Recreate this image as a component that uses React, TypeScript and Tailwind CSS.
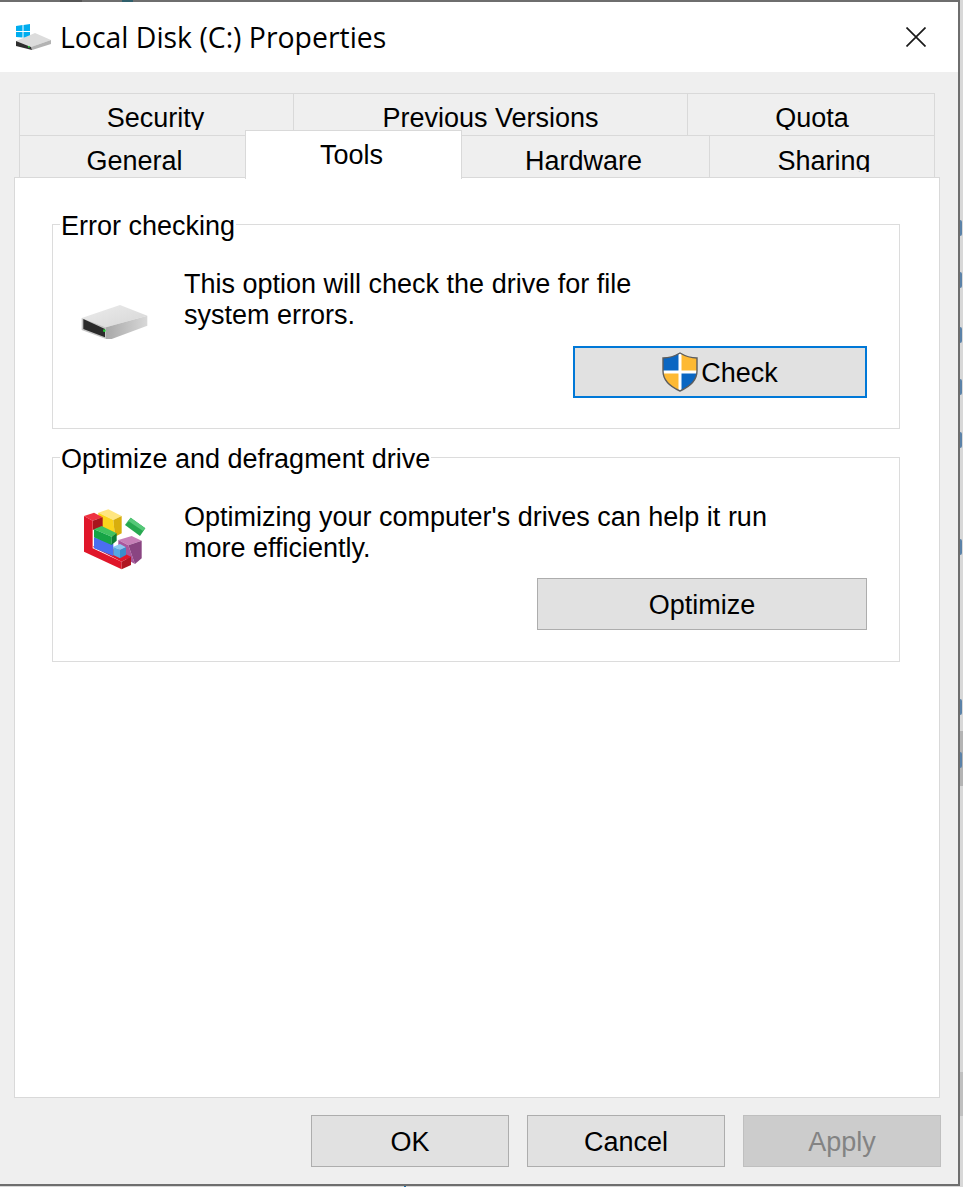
import React from "react";

const sans = "font-['Liberation_Sans',Arial,sans-serif]";

function DriveIcon() {
  return (
    <svg width="90" height="60" viewBox="0 0 270 180" className="shrink-0">
      <defs>
        <linearGradient id="driveTop" x1="0" y1="0" x2="1" y2="1">
          <stop offset="0" stopColor="#ececec" />
          <stop offset="1" stopColor="#d6d6d6" />
        </linearGradient>
        <linearGradient id="driveSide" x1="0" y1="0" x2="1" y2="0">
          <stop offset="0" stopColor="#a8a8a8" />
          <stop offset="1" stopColor="#d8d8d8" />
        </linearGradient>
        <filter id="soft">
          <feGaussianBlur stdDeviation="1.6" />
        </filter>
      </defs>
      <g filter="url(#soft)">
        <polygon points="35,87 150,48 232,80 108,115" fill="url(#driveTop)" />
        <polygon points="108,115 232,80 232,110 125,150 108,150" fill="url(#driveSide)" />
        <polygon points="35,87 108,115 108,150 35,123" fill="#c4c4c4" />
        <polygon points="40,90 105,120 105,145 40,120" fill="#2b2b2b" />
        <circle cx="103" cy="125" r="4" fill="#21c934" />
      </g>
    </svg>
  );
}

function DefragIcon() {
  return (
    <svg width="90" height="80" viewBox="0 0 270 240" className="shrink-0">
      <g filter="url(#soft)">
        {/* yellow block */}
        <polygon points="85,38 115,28 155,48 130,60" fill="#ffe680" />
        <polygon points="85,38 130,60 135,110 85,90" fill="#fbd41a" />
        <polygon points="130,60 155,48 155,100 135,110" fill="#d8ae10" />
        {/* purple block */}
        <polygon points="145,120 185,108 215,122 175,136" fill="#c77fb8" />
        <polygon points="145,120 175,136 195,192 145,165" fill="#a9579c" />
        <polygon points="175,136 215,122 215,175 195,192" fill="#8a4582" />
        {/* red L */}
        <polygon points="42,48 72,38 98,52 68,62" fill="#ee3340" />
        <polygon points="68,62 98,52 98,80 68,90" fill="#a8121e" />
        <polygon points="42,48 68,62 68,145 155,185 155,208 42,155" fill="#e0182a" />
        <polygon points="68,140 96,130 183,170 155,185" fill="#e0182a" />
        <polygon points="155,185 183,170 183,195 155,208" fill="#b01420" />
        {/* blue block */}
        <polygon points="72,112 130,132 130,168 72,145" fill="#4c6ef0" />
        {/* light blue block */}
        <polygon points="130,140 150,132 168,142 150,150" fill="#8cc8f0" />
        <polygon points="130,140 150,150 150,175 130,165" fill="#57a8e4" />
        <polygon points="150,150 168,142 168,165 150,175" fill="#3b8ccb" />
        {/* green block */}
        <polygon points="72,88 95,78 140,100 125,110" fill="#3fc25f" />
        <polygon points="72,88 125,110 125,135 72,112" fill="#12a445" />
        <polygon points="125,110 140,100 140,122 125,135" fill="#0d7d35" />
        {/* floating green */}
        <polygon points="165,75 182,53 226,85 210,108" fill="#27a84f" />
        <polygon points="165,75 182,53 226,85 218,92 176,64" fill="#55c878" />
      </g>
    </svg>
  );
}

function ShieldIcon() {
  return (
    <svg width="38" height="40" viewBox="0 0 38 40" className="shrink-0">
      <defs>
        <clipPath id="shieldClip">
          <path d="M19 1 C14 4 7 6 2 6 V19 C2 29 10 35 19 39 C28 35 36 29 36 19 V6 C31 6 24 4 19 1 Z" />
        </clipPath>
      </defs>
      <g clipPath="url(#shieldClip)">
        <rect x="0" y="0" width="19" height="20" fill="#0a66c2" />
        <rect x="19" y="0" width="19" height="20" fill="#fdb933" />
        <rect x="0" y="20" width="19" height="20" fill="#fdb933" />
        <rect x="19" y="20" width="19" height="20" fill="#0a66c2" />
        <rect x="17.5" y="0" width="3" height="40" fill="#ffffff" />
        <rect x="0" y="18.5" width="38" height="3" fill="#ffffff" />
      </g>
      <path d="M19 1 C14 4 7 6 2 6 V19 C2 29 10 35 19 39 C28 35 36 29 36 19 V6 C31 6 24 4 19 1 Z" fill="none" stroke="#5d5d5d" strokeWidth="1.4" />
    </svg>
  );
}

function TitleIcon() {
  return (
    <svg width="36" height="28" viewBox="0 0 36 28" className="shrink-0">
      <defs>
        <filter id="softSmall">
          <feGaussianBlur stdDeviation="0.35" />
        </filter>
      </defs>
      <g filter="url(#softSmall)">
        <polygon points="1,3 7.5,2 7.5,8 1,8" fill="#00adef" />
        <polygon points="8.5,1.9 15,1 15,8 8.5,8" fill="#00adef" />
        <polygon points="1,9 7.5,9 7.5,14.5 1,14" fill="#00adef" />
        <polygon points="8.5,9 15,9 15,15.5 8.5,14.7" fill="#00adef" />
        <polygon points="1,18 20,10 36,17 16,24" fill="#dcdcdc" />
        <polygon points="16,24 36,17 36,21 17,27" fill="#b3b3b3" />
        <polygon points="1,18 16,24 17,27 1,23" fill="#2f2f2f" />
        <rect x="13" y="23" width="1.6" height="1.6" fill="#23c935" />
      </g>
    </svg>
  );
}

function Tab({ label, width, pad, clip }: { label: string; width: string; pad: string; clip: string }) {
  return (
    <div className={`${width} h-[43px] ${pad} border border-[#d9d9d9] -ml-px first:ml-0 bg-[#efefef] text-center`}>
      <div className={`${clip} overflow-hidden leading-[30px]`}>{label}</div>
    </div>
  );
}

function Group({ legend, icon, iconTop, children }: { legend: string; icon: React.ReactNode; iconTop: string; children: React.ReactNode }) {
  return (
    <div className="relative w-[848px] h-[205px] border border-[#dcdcdc]">
      <span className="absolute left-[7px] -top-[14px] px-px bg-white leading-[30px]">{legend}</span>
      <div className="flex">
        <div className={`ml-[17px] ${iconTop}`}>{icon}</div>
        <div className="ml-6 mt-[44px] flex-1">{children}</div>
      </div>
    </div>
  );
}

export default function App() {
  return (
    <div className={`relative w-[963px] h-[1187px] bg-[#d8d8d8] overflow-hidden text-[27px] text-black ${sans}`}>
      <div className="flex flex-col w-[960px] h-[1186px] border-t-2 border-r-2 border-b-2 border-[#6e6e6e] bg-[#efefef]">
        {/* Title bar */}
        <div className="flex items-center h-[70px] bg-white pl-[15px] pr-[32px]">
          <TitleIcon />
          <span className="ml-[9px] text-[28.4px] font-['Open_Sans',sans-serif]">Local Disk (C:) Properties</span>
          <svg width="20" height="20" viewBox="0 0 20 20" className="ml-auto -mt-px">
            <path d="M0.5 0.5 L19.5 19.5 M19.5 0.5 L0.5 19.5" stroke="#1a1a1a" strokeWidth="1.7" fill="none" />
          </svg>
        </div>

        {/* Tabs */}
        <div className="ml-[19px] mt-[21px] w-[916px] flex">
          <Tab label="Security" width="w-[275px]" pad="pt-[9px] pr-[2px]" clip="h-[27px]" />
          <Tab label="Previous Versions" width="w-[395px]" pad="pt-[9px]" clip="h-[27px]" />
          <Tab label="Quota" width="w-[248px]" pad="pt-[9px] pl-[2px]" clip="h-[27px]" />
        </div>
        <div className="relative z-10 ml-[19px] -mt-px w-[916px] h-[43px] flex items-end">
          <Tab label="General" width="w-[227px]" pad="pt-[10px] pl-[4px]" clip="h-[26px]" />
          <div className="relative w-[217px] h-[49px] -ml-px -mb-px border border-b-0 border-[#d9d9d9] bg-white pt-[9px] pr-[4px] text-center leading-[30px]">
            Tools
          </div>
          <Tab label="Hardware" width="w-[249px]" pad="pt-[10px] pr-[4px]" clip="h-[26px]" />
          <Tab label="Sharing" width="w-[226px]" pad="pt-[10px] pl-[4px]" clip="h-[26px]" />
        </div>

        {/* Page */}
        <div className="ml-[14px] -mt-px w-[926px] h-[921px] border border-[#d9d9d9] bg-white pl-[37px] pt-[46px] flex flex-col gap-[28px]">
          <Group legend="Error checking" icon={<DriveIcon />} iconTop="mt-[64px]">
            <p className="leading-[31px]">
              This option will check the drive for file
              <br />
              system errors.
            </p>
            <div className="flex justify-end mr-[32px] mt-[15px]">
              <button className="flex items-center justify-center w-[294px] h-[52px] border-2 border-[#0078d7] bg-[#e1e1e1]">
                <ShieldIcon />
                <span className="ml-[2px] mr-[1px] pt-[2px]">Check</span>
              </button>
            </div>
          </Group>
          <Group legend="Optimize and defragment drive" icon={<DefragIcon />} iconTop="mt-[42px]">
            <p className="leading-[31px]">
              Optimizing your computer's drives can help it run
              <br />
              more efficiently.
            </p>
            <div className="flex justify-end mr-[32px] mt-[14px]">
              <button className="w-[330px] h-[52px] pt-[2px] border border-[#adadad] bg-[#e1e1e1]">Optimize</button>
            </div>
          </Group>
        </div>

        {/* Footer buttons */}
        <div className="flex mt-[17px] ml-[311px] gap-[18px]">
          <button className="w-[198px] h-[52px] pt-[2px] border border-[#adadad] bg-[#e1e1e1]">OK</button>
          <button className="w-[198px] h-[52px] pt-[2px] border border-[#adadad] bg-[#e1e1e1]">Cancel</button>
          <button className="w-[198px] h-[52px] pt-[2px] border border-[#bfbfbf] bg-[#cccccc] text-[#838383]">Apply</button>
        </div>
      </div>

      {/* Bits of the desktop showing behind the window edge */}
      <span className="absolute left-[122px] top-0 w-[11px] h-[2px] bg-[#2f5f6b]" />
      <span className="absolute left-[60px] top-0 w-[22px] h-[2px] bg-[#565656]" />
      <span className="absolute left-[404px] bottom-0 w-[2px] h-px bg-[#1f6fa8]" />
      <span className="absolute left-[960px] top-[220px] w-[2px] h-[16px] rounded-r-full bg-[#5b82a8]" />
      <span className="absolute left-[960px] top-[272px] w-[2px] h-[16px] rounded-r-full bg-[#5b82a8]" />
      <span className="absolute left-[960px] top-[327px] w-[2px] h-[16px] rounded-r-full bg-[#5b82a8]" />
      <span className="absolute left-[960px] top-[379px] w-[2px] h-[16px] rounded-r-full bg-[#5b82a8]" />
      <span className="absolute left-[960px] top-[432px] w-[2px] h-[16px] rounded-r-full bg-[#5b82a8]" />
      <span className="absolute left-[960px] top-[539px] w-[2px] h-[16px] rounded-r-full bg-[#5b82a8]" />
      <span className="absolute left-[960px] top-[699px] w-[2px] h-[16px] rounded-r-full bg-[#5b82a8]" />
      <span className="absolute left-[960px] top-[731px] w-[3px] h-[55px] bg-[#b4b4b4]" />
      <span className="absolute left-[960px] top-[752px] w-[2px] h-[16px] rounded-r-full bg-[#5b82a8]" />
      <span className="absolute left-[960px] top-[1072px] w-[3px] h-[44px] bg-[#c0c0c0]" />
    </div>
  );
}
